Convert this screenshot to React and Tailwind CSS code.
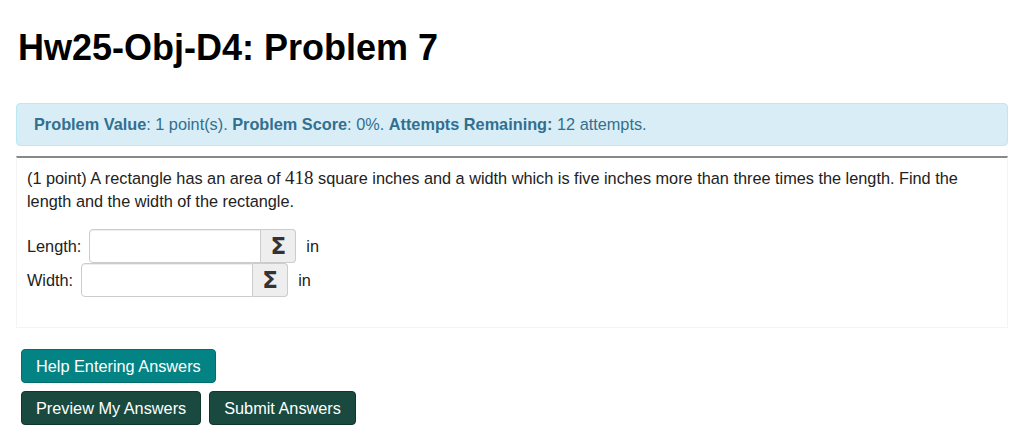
import React from 'react';

const Sigma = () => (
    <span className="font-['DejaVu_Sans',sans-serif] font-bold text-[23px] leading-none text-[#333]">Σ</span>
);

const AnswerRow = ({ label, width }) => (
    <div className="flex items-center h-[34px]">
        <span className="mr-[8px]">{label}</span>
        <div className="flex h-[34px]">
            <input
                type="text"
                className={`${width} h-full border border-[#ccc] rounded-l-[4px] bg-white shadow-[inset_0_1px_1px_rgba(0,0,0,0.075)] outline-none`}
            />
            <button className="w-[35px] h-full border border-l-0 border-[#ccc] rounded-r-[4px] bg-[#eee] flex items-center justify-center">
                <Sigma />
            </button>
        </div>
        <span className="ml-[10px]">in</span>
    </div>
);

const App = () => {
    return (
        <div className="w-[1024px] h-[439px] bg-white font-['Liberation_Sans',Arial,sans-serif] text-[#333] overflow-hidden">
            <div className="px-[16px]">
                <h1 className="pt-[26px] pl-[2px] text-[36px] leading-[44px] font-bold text-black">Hw25-Obj-D4: Problem 7</h1>

                <div className="mt-[33px] h-[43px] flex items-center px-[17px] bg-[#d9edf7] border border-[#bce8f1] rounded-[4px] text-[#31708f] text-[16.3px]">
                    <span>
                        <b>Problem Value</b>: 1 point(s). <b>Problem Score</b>: 0%. <b>Attempts Remaining:</b> 12 attempts.
                    </span>
                </div>

                <div className="mt-[10px] h-[172px] border-t-2 border-t-[#888] border-x border-b border-x-[#f4f4f4] border-b-[#f4f4f4] pl-[10px] pr-[40px] pt-[9px] text-[16.3px] text-[#222]">
                    <p className="leading-[23px]">
                        (1 point) A rectangle has an area of <span className="font-['Liberation_Serif',serif] text-[19px] leading-none">418</span> square inches and a width which is five inches more than three times the length. Find the length and the width of the rectangle.
                    </p>
                    <div className="mt-[16px] flex flex-col">
                        <AnswerRow label="Length:" width="w-[172px]" />
                        <AnswerRow label="Width:" width="w-[172px]" />
                    </div>
                </div>

                <div className="mt-[21px] pl-[5px] flex flex-col gap-[8px] text-[16.3px] text-white">
                    <div>
                        <button className="h-[34px] px-[14px] bg-[#038383] border border-[#026e6e] rounded-[4px]">Help Entering Answers</button>
                    </div>
                    <div className="flex gap-[8px]">
                        <button className="h-[34px] px-[14px] bg-[#1a4a3f] border border-[#12362d] rounded-[4px]">Preview My Answers</button>
                        <button className="h-[34px] px-[14px] bg-[#1a4a3f] border border-[#12362d] rounded-[4px]">Submit Answers</button>
                    </div>
                </div>
            </div>
        </div>
    );
};

export default App;
